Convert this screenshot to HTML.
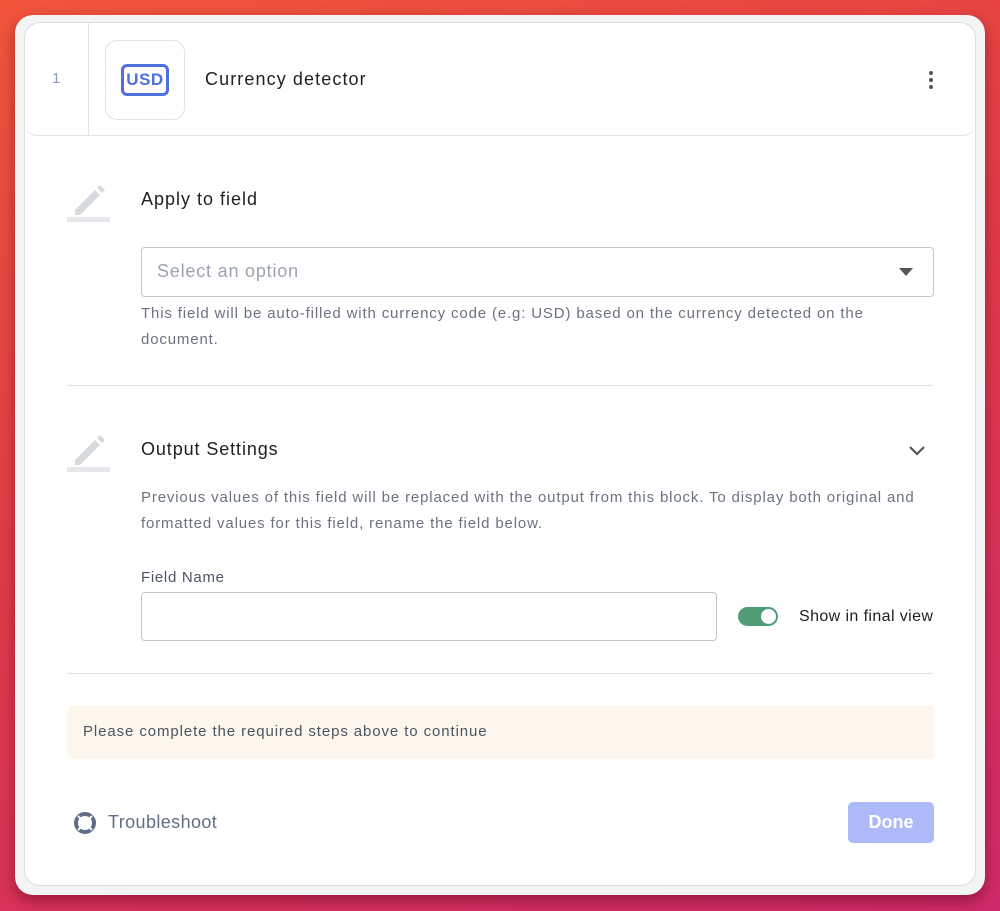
<!DOCTYPE html>
<html><head><style>
*{box-sizing:border-box;margin:0;padding:0}
body{width:1000px;height:911px;overflow:hidden;font-family:"Liberation Sans",sans-serif;background:linear-gradient(160deg,#f0553a 0%,#e0384a 50%,#cf2a6a 100%);position:relative}
.outer{position:absolute;left:15px;top:15px;width:970px;height:880px;background:#f4f4f5;border-radius:18px;box-shadow:0 6px 14px rgba(80,0,20,.45)}
.card{position:absolute;left:24px;top:22px;width:952px;height:864px;background:#fff;border:1px solid #dedee2;border-radius:16px}
.hdr{position:absolute;left:0;top:0;width:950px;height:113px;border-bottom:1px solid #e2e2e6;border-radius:16px 16px 12px 12px}
.abs{position:absolute}
.t{color:#6b7280;font-size:15px;line-height:26px;letter-spacing:.85px}
.hr{position:absolute;left:42px;width:866px;height:1px;background:#e2e2e6}
</style></head><body>
<div class="outer"></div>
<div class="card">
 <div class="hdr"></div>
 <div class="abs" style="left:63px;top:0;width:1px;height:113px;background:#e2e2e6"></div>
 <div class="abs" style="left:27px;top:47px;color:#8a9ab5;font-size:15px">1</div>
 <div class="abs" style="left:80px;top:17px;width:80px;height:80px;border:1px solid #e2e2e6;border-radius:12px"></div>
 <div class="abs" style="left:96px;top:41px;width:48px;height:32px;border:3px solid #4f6fdc;border-radius:6px;color:#4f6fdc;font-weight:bold;font-size:17px;line-height:26px;text-align:center;letter-spacing:.5px">USD</div>
 <div class="abs" style="left:180px;top:46px;font-size:18px;color:#1f1f24;letter-spacing:1.1px">Currency detector</div>
 <svg class="abs" style="left:900px;top:46px" width="12" height="22"><circle cx="6" cy="4" r="2" fill="#555"/><circle cx="6" cy="11" r="2" fill="#555"/><circle cx="6" cy="18" r="2" fill="#555"/></svg>

 <svg class="abs" style="left:42px;top:155px" width="44" height="44"><path d="M8 32 L28 12 L33 17 L13 37 L8 37Z" fill="#d6d9de"/><path d="M30 10 L33 7 L38 12 L35 15Z" fill="#d6d9de"/><rect x="0" y="39" width="43" height="5" fill="#e5e7eb"/></svg>
 <div class="abs" style="left:116px;top:166px;font-size:18px;color:#1f1f24;letter-spacing:1px">Apply to field</div>
 <div class="abs" style="left:116px;top:224px;width:793px;height:50px;border:1px solid #c5c5ca;border-radius:4px"></div>
 <div class="abs" style="left:132px;top:238px;font-size:18px;color:#9ca3af;letter-spacing:.8px">Select an option</div>
 <svg class="abs" style="left:874px;top:245px" width="14" height="9"><path d="M0 0H14L7 8Z" fill="#555"/></svg>
 <div class="abs t" style="left:116px;top:278px;width:790px">This field will be auto-filled with currency code (e.g: USD) based on the currency detected on the document.</div>
 <div class="hr" style="top:362px"></div>

 <svg class="abs" style="left:42px;top:405px" width="44" height="44"><path d="M8 32 L28 12 L33 17 L13 37 L8 37Z" fill="#d6d9de"/><path d="M30 10 L33 7 L38 12 L35 15Z" fill="#d6d9de"/><rect x="0" y="39" width="43" height="5" fill="#e5e7eb"/></svg>
 <div class="abs" style="left:116px;top:416px;font-size:18px;color:#1f1f24;letter-spacing:.9px">Output Settings</div>
 <svg class="abs" style="left:883px;top:422px" width="18" height="12"><path d="M2 2L9 9L16 2" stroke="#555" stroke-width="2.2" fill="none"/></svg>
 <div class="abs t" style="left:116px;top:462px;width:800px">Previous values of this field will be replaced with the output from this block. To display both original and formatted values for this field, rename the field below.</div>
 <div class="abs" style="left:116px;top:546px;font-size:15px;color:#4b5563;letter-spacing:.7px">Field Name</div>
 <div class="abs" style="left:116px;top:569px;width:576px;height:49px;border:1px solid #c5c5ca;border-radius:4px"></div>
 <div class="abs" style="left:713px;top:584px;width:40px;height:19px;border-radius:10px;background:#509c78"></div>
 <div class="abs" style="left:736px;top:586px;width:15px;height:15px;border-radius:50%;background:#fff"></div>
 <div class="abs" style="left:774px;top:585px;font-size:16px;color:#1f1f24;letter-spacing:.4px">Show in final view</div>
 <div class="hr" style="top:650px"></div>

 <div class="abs" style="left:42px;top:683px;width:867px;height:53px;background:#fdf6ec;border-radius:4px"></div>
 <div class="abs" style="left:58px;top:700px;font-size:15px;color:#4b5563;letter-spacing:.9px">Please complete the required steps above to continue</div>

 <svg class="abs" style="left:48px;top:788px" width="24" height="24" viewBox="0 0 24 24"><circle cx="12" cy="12" r="9" fill="none" stroke="#5f6e86" stroke-width="4"/><circle cx="12" cy="12" r="3.5" fill="#fff"/><path d="M5 5L9 9M19 5L15 9M5 19L9 15M19 19L15 15" stroke="#fff" stroke-width="2"/></svg>
 <div class="abs" style="left:83px;top:789px;font-size:18px;color:#5f6e86;letter-spacing:.4px">Troubleshoot</div>
 <div class="abs" style="left:823px;top:779px;width:86px;height:41px;background:#adb9f9;border-radius:5px;color:#fff;font-size:18px;font-weight:bold;text-align:center;line-height:41px">Done</div>
</div>
</body></html>
